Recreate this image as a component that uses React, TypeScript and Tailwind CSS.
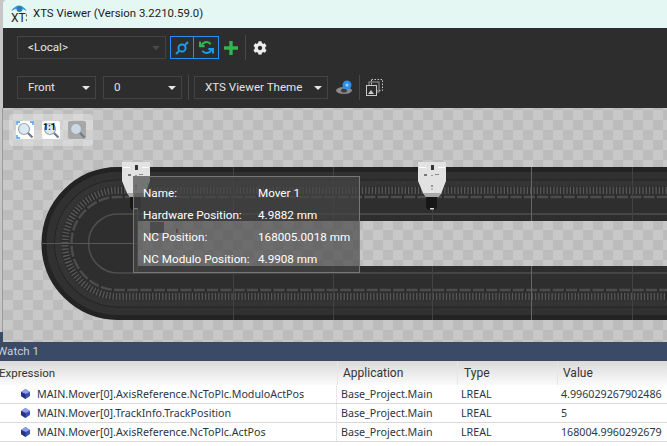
import { FaCog } from 'react-icons/fa'

const CY = 243.5
const ring = (r: number) => `M 670 ${CY - r} H 118 A ${r} ${r} 0 0 0 118 ${CY + r} H 670`
const BODY = `${ring(76)} Z M 137 221 H 670 V 266 H 137 Z`
const GRID_LINES = [233, 333, 432, 531, 632]

const ROWS = [
  { expr: 'MAIN.Mover[0].AxisReference.NcToPlc.ModuloActPos', value: '4.996029267902486' },
  { expr: 'MAIN.Mover[0].TrackInfo.TrackPosition', value: '5' },
  { expr: 'MAIN.Mover[0].AxisReference.NcToPlc.ActPos', value: '168004.9960292679' },
]

const TIP = [
  ['Name:', 'Mover 1'],
  ['Hardware Position:', '4.9882 mm'],
  ['NC Position:', '168005.0018 mm'],
  ['NC Modulo Position:', '4.9908 mm'],
]

function Caret({ dim }: { dim?: boolean }) {
  return (
    <svg width="8" height="4" viewBox="0 0 8 4" className="shrink-0">
      <path d="M0 0H8L4 4Z" fill={dim ? '#4a4a4a' : '#e6e6e6'} />
    </svg>
  )
}

function Combo({ label, width, dim }: { label: string; width: string; dim?: boolean }) {
  return (
    <div className={`${width} h-[23px] border border-[#434343] flex items-center justify-between pl-[10px] pr-[5px] text-[11.6px] text-[#e4e4e4]`}>
      <span>{label}</span>
      <Caret dim={dim} />
    </div>
  )
}

function Separator() {
  return <div className="w-px h-[25px] bg-[#484848]" />
}

function Mover({ x }: { x: number }) {
  return (
    <g transform={`translate(${x - 418} 0)`}>
      <path d="M426 196H437V205Q437 210 433 210H430Q426 210 426 205Z" fill="#161616" />
      <rect x="430" y="208" width="4" height="1.5" fill="#d8d8d8" />
      <path d="M418 162H446V181L441 194L438 197H426L423 193L418 181Z" fill="#e2e2e2" />
      <path d="M423 193H441L438 197H426Z" fill="#a8a8a8" />
      <rect x="419" y="167" width="7" height="1" fill="#fff" />
      <rect x="438" y="167" width="7" height="1" fill="#fff" />
      <rect x="431" y="165" width="3" height="5" fill="#333" />
      <rect x="424" y="174" width="3" height="2" fill="#777" />
      <rect x="435" y="174" width="4" height="1" fill="#888" />
      <rect x="431" y="175" width="2" height="1" fill="#999" />
      <rect x="431" y="185" width="2" height="2" fill="#999" />
      <rect x="431" y="188" width="2" height="2" fill="#bbb" />
    </g>
  )
}

function Track() {
  return (
    <svg className="absolute left-0 top-0" width="664" height="234" viewBox="3 108 664 234">
      <path d={BODY} fill="#2e2e2e" fillRule="evenodd" />
      <path d={ring(74)} fill="none" stroke="#232323" strokeWidth="5" />
      <path d={ring(67.5)} fill="none" stroke="#313131" strokeWidth="8" />
      <path d={ring(63.5)} fill="none" stroke="#212121" strokeWidth="1" />
      <path d={ring(60)} fill="none" stroke="#343434" strokeWidth="6" />
      <path d={ring(60.5)} fill="none" stroke="#424242" strokeWidth="1" strokeDasharray="1 12.3" />
      <path d={ring(53)} fill="none" stroke="#2c2c2c" strokeWidth="7" />
      <path d={ring(53)} fill="none" stroke="#585858" strokeWidth="7" strokeDasharray="1.3 2" />
      <path d={ring(46.5)} fill="none" stroke="#4c4c4c" strokeWidth="2.5" />
      <path d={ring(46.5)} fill="none" stroke="#282828" strokeWidth="3" strokeDasharray="2 11.3" />
      <path d={ring(29.5)} fill="none" stroke="#4f4f4f" strokeWidth="1.5" />
      <path d="M41 243.5H137" stroke="#585858" strokeWidth="1" />
      <path d="M137.5 180V273" stroke="#5a5a5a" strokeWidth="1" />
      {GRID_LINES.map((x) => (
        <path
          key={x}
          d={`M${x + 0.5} 167V221M${x + 0.5} 266V320`}
          stroke={x === 531 ? '#666' : '#424242'}
          strokeWidth="1"
        />
      ))}
      <rect x="150" y="222" width="14" height="11" fill="#5a5a5a" />
      <rect x="176" y="229" width="2" height="4" fill="#8a4a4a" />
      <Mover x={122} />
      <Mover x={418} />
    </svg>
  )
}

function ToolIcon({ tone, children }: { tone: string; children?: React.ReactNode }) {
  return (
    <div className={`${tone} relative w-[18px] h-[18px] rounded-[2px]`}>
      <svg className="absolute left-0 top-0" width="18" height="18" viewBox="0 0 18 18">
        <circle cx="8" cy="8" r="5.5" fill="#d3e3f2" fillOpacity="0.8" stroke="#9aa7b3" strokeWidth="1.2" />
        <path d="M12 12L16.5 16.5" stroke="#6f7a84" strokeWidth="2.2" />
      </svg>
      {children}
    </div>
  )
}

function WatchIcon() {
  return (
    <svg width="9" height="10" viewBox="0 0 9 10" className="shrink-0">
      <path d="M4.5 0L9 3V7L4.5 10L0 7V3Z" fill="#3a4fb8" />
      <path d="M4.5 0L9 3L4.5 5L0 3Z" fill="#8f9fe6" />
      <path d="M4.5 5V10L0 7V3Z" fill="#26327a" />
    </svg>
  )
}

export default function App() {
  return (
    <div className="w-[667px] h-[446px] overflow-hidden flex flex-col bg-white font-['Roboto',sans-serif]">
      <div className="h-[342px] flex bg-[#c6c6c6]">
        <div className="w-[3px] flex flex-col">
          <div className="h-[108px]" />
          <div className="flex-1 border-r border-[#9a9a9a]" />
          <div className="h-[10px] bg-[#3b4a66]" />
        </div>
        <div className="flex-1 flex flex-col min-w-0">
          {/* Title bar */}
          <div className="h-[28px] bg-[#e4f7f3] rounded-tl-[4px] flex items-center pl-[8px] gap-[6px]">
            <div className="relative w-[16px] h-[22px] overflow-hidden">
              <svg className="absolute left-0 top-0" width="16" height="11" viewBox="0 0 16 11">
                <path d="M0 8Q8 -3 16 8Q8 3 0 8Z" fill="#3f9bd0" />
                <circle cx="8.5" cy="6" r="3" fill="#2a7fb5" />
              </svg>
              <span className="absolute left-0 top-[9px] text-[12px] leading-[13px] text-[#222] whitespace-nowrap">XTS</span>
            </div>
            <span className="text-[11.4px] text-[#1c1c1c] whitespace-nowrap">XTS Viewer (Version 3.2210.59.0)</span>
          </div>

          {/* Toolbar */}
          <div className="h-[80px] bg-[#2d2d2e] pl-[14px] pt-[8px] flex flex-col gap-[17px]">
            <div className="h-[23px] flex items-center">
              <Combo label="<Local>" width="w-[149px]" dim />
              <div className="ml-[4px] w-[24px] h-[23px] border border-[#2a8cf0] flex items-center justify-center">
                <svg width="16" height="16" viewBox="0 0 16 16">
                  <path d="M2 14L5 11M11 5L14 2" stroke="#1c9be6" strokeWidth="2" />
                  <circle cx="8" cy="8" r="3.6" fill="none" stroke="#1c9be6" strokeWidth="2" />
                </svg>
              </div>
              <div className="w-[25px] h-[23px] border border-l-0 border-[#2a8cf0] flex items-center justify-center">
                <svg width="15" height="15" viewBox="0 0 16 16" fill="none" strokeWidth="2.2">
                  <path d="M2.5 7A5.5 5.5 0 0 1 12.5 4.5" stroke="#2fb457" />
                  <path d="M1 1.5V6.5H6" stroke="#2fb457" />
                  <path d="M13.5 9A5.5 5.5 0 0 1 3.5 11.5" stroke="#1c9be6" />
                  <path d="M15 14.5V9.5H10" stroke="#1c9be6" />
                </svg>
              </div>
              <svg className="ml-[5px]" width="14" height="14" viewBox="0 0 14 14">
                <path d="M7 0V14M0 7H14" stroke="#35b34f" strokeWidth="3.4" />
              </svg>
              <div className="ml-[7px]">
                <Separator />
              </div>
              <FaCog className="ml-[7px] text-[#ececec] text-[14px]" />
            </div>
            <div className="h-[23px] flex items-center">
              <Combo label="Front" width="w-[79px]" />
              <div className="ml-[7px]">
                <Combo label="0" width="w-[79px]" />
              </div>
              <div className="mx-[5.5px]">
                <Separator />
              </div>
              <Combo label="XTS Viewer Theme" width="w-[134px]" />
              <svg className="ml-[8px]" width="17" height="15" viewBox="0 0 17 15">
                <ellipse cx="8" cy="10.5" rx="8" ry="3.5" fill="#8a8a8a" />
                <ellipse cx="8" cy="10.5" rx="3" ry="2" fill="#3d3d3d" />
                <circle cx="11" cy="5" r="4.5" fill="#2b8fe6" />
                <circle cx="11" cy="5" r="1.5" fill="#9ed0f5" />
              </svg>
              <div className="ml-[6px]">
                <Separator />
              </div>
              <svg className="ml-[6px]" width="17" height="17" viewBox="0 0 17 17" fill="none">
                <rect x="5.5" y="0.5" width="11" height="11" stroke="#c8c8c8" strokeDasharray="1.5 1.5" />
                <rect x="3" y="3" width="10" height="10" stroke="#9a9a9a" />
                <rect x="0.5" y="6.5" width="10" height="10" fill="#2d2d2e" stroke="#c8c8c8" />
                <path d="M2 15L5 11L8 15Z" fill="#c8c8c8" />
              </svg>
            </div>
          </div>

          {/* Canvas */}
          <div className="relative flex-1 bg-[conic-gradient(#c8c8c8_25%,#bcbcbc_0_50%,#c8c8c8_0_75%,#bcbcbc_0)] bg-[length:20px_20px] bg-[position:0px_2px]">
            <Track />

            <div className="absolute left-[6px] top-[6px] w-[84px] h-[32px] rounded-[4px] bg-white/30 flex items-center gap-[8px] pl-[7px]">
              <ToolIcon tone="bg-white">
                <svg className="absolute left-0 top-0" width="18" height="18" viewBox="0 0 18 18" fill="none" stroke="#4a9be8" strokeWidth="1.4">
                  <path d="M1 4V1H4M14 1H17V4M1 14V17H4" />
                </svg>
              </ToolIcon>
              <ToolIcon tone="bg-white">
                <span className="absolute left-[1px] top-[0px] text-[9px] leading-[12px] font-bold text-black">1:1</span>
              </ToolIcon>
              <ToolIcon tone="bg-[#a8a8a8]" />
            </div>

            <div className="absolute left-[130px] top-[68px] w-[227px] h-[97px] border border-[#777] bg-[#464646]/70 pl-[9px] pt-[6px] text-[11.7px] text-white">
              {TIP.map(([name, value]) => (
                <div key={name} className="h-[22px] flex items-center whitespace-nowrap">
                  <span className="w-[115px]">{name}</span>
                  <span>{value}</span>
                </div>
              ))}
            </div>
          </div>
        </div>
      </div>

      {/* Watch panel */}
      <div className="h-[19px] bg-[#3b4a66] text-[11.6px] leading-[19px] text-[#c9d1dd] -indent-[3px] whitespace-nowrap">Watch 1</div>
      <div className="h-[24px] grid grid-cols-[337px_120px_100px_1fr] bg-gradient-to-b from-[#dadada] to-[#fbfbfb] text-[12px] leading-[24px] text-[#333]">
        <div className="text-[11.5px] -indent-[1px]">Expression</div>
        <div className="border-l border-[#e6e6e6] pl-[5px]">Application</div>
        <div className="border-l border-[#e6e6e6] pl-[6px]">Type</div>
        <div className="border-l border-[#e6e6e6] pl-[5px]">Value</div>
      </div>
      {ROWS.map((row) => (
        <div key={row.expr} className="h-[19px] grid grid-cols-[337px_120px_100px_1fr] border-b border-[#d9d9d9] text-[10.7px] leading-[18px] text-[#2b3645] font-['Noto_Sans',sans-serif]">
          <div className="flex items-center pl-[21px] gap-[7px] border-r border-[#e8e8e8] whitespace-nowrap">
            <WatchIcon />
            <span>{row.expr}</span>
          </div>
          <div className="pl-[4px]">Base_Project.Main</div>
          <div className="pl-[4px]">LREAL</div>
          <div className="pl-[4px]">{row.value}</div>
        </div>
      ))}
    </div>
  )
}
